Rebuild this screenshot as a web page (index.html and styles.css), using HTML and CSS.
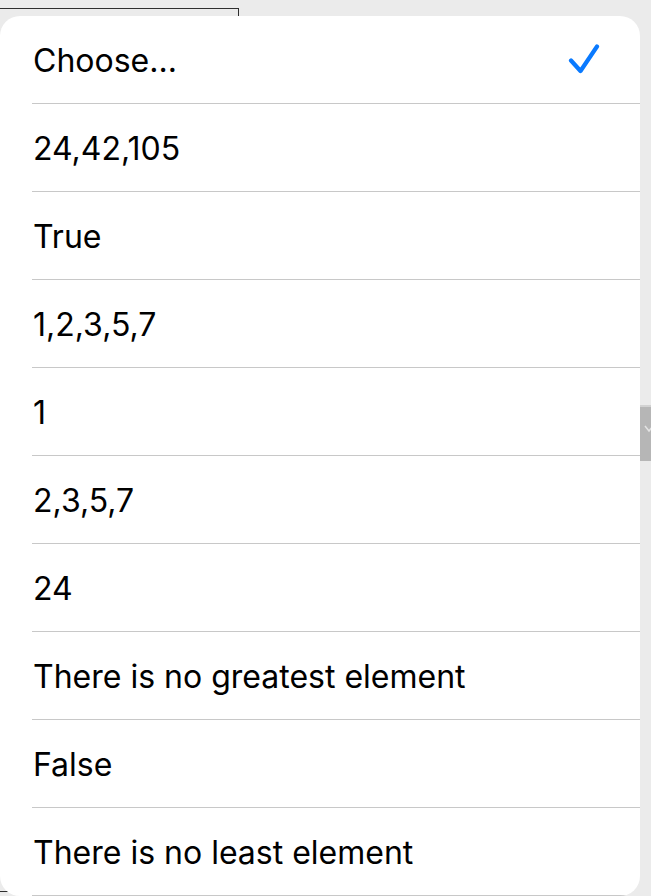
FILE: index.html
```html
<!DOCTYPE html>
<html>
<head>
<meta charset="utf-8">
<link rel="stylesheet" href="styles.css">
</head>
<body>
<div class="page">
  <div class="field"></div>
  <div class="select-stub">
    <svg class="chev" width="10" height="8" viewBox="0 0 10 8"><path d="M1 1 L5 6 L9 1" fill="none" stroke="#e4e4e4" stroke-width="1.5"/></svg>
  </div>
</div>
<div class="sheet">
  <ul class="options">
    <li class="option selected"><span>Choose...</span>
      <svg class="check" width="34" height="34" viewBox="0 0 34 34"><path d="M3 16.5 L12.5 27 L29 2.5" fill="none" stroke="#0a7aff" stroke-width="4.2" stroke-linecap="round" stroke-linejoin="round"/></svg>
    </li>
    <li class="option"><span>24,42,105</span></li>
    <li class="option"><span>True</span></li>
    <li class="option"><span>1,2,3,5,7</span></li>
    <li class="option"><span>1</span></li>
    <li class="option"><span>2,3,5,7</span></li>
    <li class="option"><span>24</span></li>
    <li class="option"><span>There is no greatest element</span></li>
    <li class="option"><span>False</span></li>
    <li class="option last"><span>There is no least element</span></li>
  </ul>
</div>
</body>
</html>
```
FILE: styles.css
```css
html, body {
  margin: 0;
  padding: 0;
}
body {
  width: 651px;
  height: 896px;
  overflow: hidden;
  background: #ebebeb;
  font-family: Inter, Roboto, "Liberation Sans", sans-serif;
  position: relative;
}
.page {
  position: relative;
  height: 896px;
}
.field {
  margin-top: 8px;
  margin-left: -2px;
  width: 241px;
  height: 884px;
  border: 1.5px solid #2e2e2e;
  box-sizing: border-box;
}
.select-stub {
  position: absolute;
  left: 640px;
  top: 397px;
  width: 30px;
  height: 56px;
  background: #b6b6b6;
  border-top: 2px solid #d2d2d2;
  box-sizing: border-box;
}
.chev {
  display: block;
  margin-left: 4px;
  margin-top: 18px;
}
.sheet {
  position: absolute;
  left: 0;
  top: 16px;
  width: 640px;
  height: 880px;
  background: #fff;
  border-radius: 20px;
  overflow: hidden;
}
.options {
  list-style: none;
  margin: 0;
  padding: 0 0 0 32px;
}
.option {
  height: 87px;
  border-bottom: 1px solid #c8c8c8;
  display: flex;
  align-items: center;
  justify-content: space-between;
  padding-left: 1px;
  padding-right: 38px;
  font-size: 32px;
  color: #000;
}
.option span {
  line-height: 1;
  position: relative;
  top: 1px;
}
.check {
  display: block;
  margin-top: 2px;
}
```
